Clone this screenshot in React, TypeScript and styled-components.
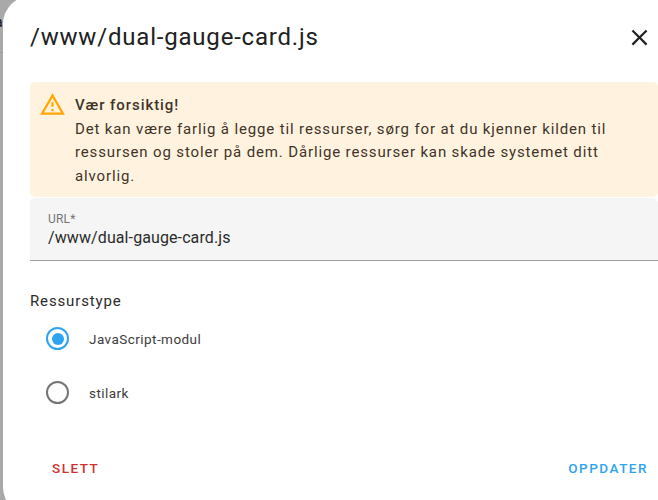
import { createGlobalStyle } from "styled-components";
import styled from "styled-components";

const GlobalStyle = createGlobalStyle`
  html, body {
    margin: 0;
    padding: 0;
    font-family: Roboto, "Noto Sans", sans-serif;
  }
`;

const Page = styled.div`
  position: relative;
  width: 658px;
  height: 500px;
  overflow: hidden;
  background-color: #a9a9a9;
`;

const BehindLetter = styled.span`
  position: absolute;
  left: -5px;
  top: 14px;
  font-size: 14px;
  color: #111;
`;

const BehindLine = styled.div`
  position: absolute;
  left: 0;
  top: 52px;
  width: 3px;
  height: 1px;
  background-color: #9b9b9b;
`;

const Dialog = styled.div`
  position: relative;
  box-sizing: border-box;
  width: 655px;
  height: 519px;
  margin-left: 3px;
  margin-top: -4px;
  padding: 4px 0 0 27px;
  background-color: #fff;
  border-radius: 28px 0 0 28px;
  display: flex;
  flex-direction: column;
  align-items: flex-start;
`;

const Header = styled.div`
  display: flex;
  justify-content: space-between;
  align-items: center;
  box-sizing: border-box;
  width: 622.5px;
  height: 82px;
  padding-bottom: 8px;
`;

const Title = styled.h2`
  margin: 0;
  font-size: 24px;
  font-weight: 400;
  letter-spacing: 0.8px;
  color: #212121;
`;

const CloseButton = styled.button`
  display: flex;
  padding: 0;
  border: 0;
  background: none;
  color: #212121;
`;

const Alert = styled.div`
  display: flex;
  box-sizing: border-box;
  width: 628px;
  height: 115px;
  padding: 9px 8px 0 9px;
  gap: 9px;
  background-color: #fff3e0;
  border-radius: 5px;
`;

const AlertText = styled.div`
  margin-top: 3px;
  font-size: 15px;
  line-height: 23.5px;
  letter-spacing: 0.86px;
  color: #3f3427;
  white-space: nowrap;
`;

const AlertTitle = styled.div`
  font-weight: 500;
  letter-spacing: 0.93px;
`;

const Field = styled.div`
  box-sizing: border-box;
  width: 628px;
  height: 63px;
  margin-top: 1px;
  padding: 14px 18px 0;
  background-color: #f5f5f5;
  border-bottom: 1px solid #9e9e9e;
  border-radius: 5px 5px 0 0;
`;

const FieldLabel = styled.div`
  font-size: 12px;
  line-height: 14px;
  letter-spacing: 0.2px;
  color: #757575;
`;

const FieldValue = styled.div`
  margin-top: 2px;
  margin-bottom: 1px;
  font-size: 16px;
  line-height: 20px;
  letter-spacing: 0.1px;
  color: #2b2b2b;
`;

const GroupLabel = styled.div`
  margin-top: 31px;
  font-size: 15px;
  line-height: 18px;
  letter-spacing: 0.86px;
  color: #2b2b2b;
`;

const RadioRow = styled.label<{ $first?: boolean }>`
  display: flex;
  align-items: center;
  gap: 20px;
  margin-top: ${(p) => (p.$first ? "17px" : "31px")};
  margin-left: 16px;
  height: 23px;
  font-size: 13.5px;
  letter-spacing: 0.45px;
  color: #3c3c3c;
`;

const RadioOuter = styled.span<{ $checked?: boolean }>`
  display: flex;
  align-items: center;
  justify-content: center;
  box-sizing: border-box;
  width: 23px;
  height: 23px;
  border: 2px solid ${(p) => (p.$checked ? "#2ea3f2" : "#757575")};
  border-radius: 50%;
`;

const RadioDot = styled.span`
  width: 12px;
  height: 12px;
  border-radius: 50%;
  background-color: #2ea3f2;
`;

const Footer = styled.div`
  display: flex;
  justify-content: space-between;
  align-items: center;
  width: 618px;
  margin-top: 56px;
  padding-left: 22px;
  box-sizing: border-box;
`;

const ActionButton = styled.button<{ $color: string }>`
  padding: 0;
  border: 0;
  background: none;
  font-family: inherit;
  font-size: 13.5px;
  font-weight: 500;
  letter-spacing: 1.5px;
  color: ${(p) => p.$color};
`;

function WarningIcon() {
  return (
    <svg width="27" height="27" viewBox="0 0 24 24" fill="#ffa600">
      <path d="M12 2 1 21h22L12 2zm0 3.99L19.53 19H4.47L12 5.99zM11 10v4h2v-4h-2zm0 6v2h2v-2h-2z" />
    </svg>
  );
}

function CloseIcon() {
  return (
    <svg width="27" height="27" viewBox="0 0 24 24" fill="currentColor">
      <path d="M19 6.41 17.59 5 12 10.59 6.41 5 5 6.41 10.59 12 5 17.59 6.41 19 12 13.41 17.59 19 19 17.59 13.41 12z" />
    </svg>
  );
}

export default function App() {
  return (
    <Page>
      <GlobalStyle />
      <BehindLetter>a</BehindLetter>
      <BehindLine />
      <Dialog>
        <Header>
          <Title>/www/dual-gauge-card.js</Title>
          <CloseButton aria-label="Lukk">
            <CloseIcon />
          </CloseButton>
        </Header>
        <Alert>
          <WarningIcon />
          <AlertText>
            <AlertTitle>Vær forsiktig!</AlertTitle>
            Det kan være farlig å legge til ressurser, sørg for at du kjenner kilden til
            <br />
            ressursen og stoler på dem. Dårlige ressurser kan skade systemet ditt
            <br />
            alvorlig.
          </AlertText>
        </Alert>
        <Field>
          <FieldLabel>URL*</FieldLabel>
          <FieldValue>/www/dual-gauge-card.js</FieldValue>
        </Field>
        <GroupLabel>Ressurstype</GroupLabel>
        <RadioRow $first>
          <RadioOuter $checked>
            <RadioDot />
          </RadioOuter>
          JavaScript-modul
        </RadioRow>
        <RadioRow>
          <RadioOuter />
          stilark
        </RadioRow>
        <Footer>
          <ActionButton $color="#d32f2f">SLETT</ActionButton>
          <ActionButton $color="#2ea3f2">OPPDATER</ActionButton>
        </Footer>
      </Dialog>
    </Page>
  );
}
